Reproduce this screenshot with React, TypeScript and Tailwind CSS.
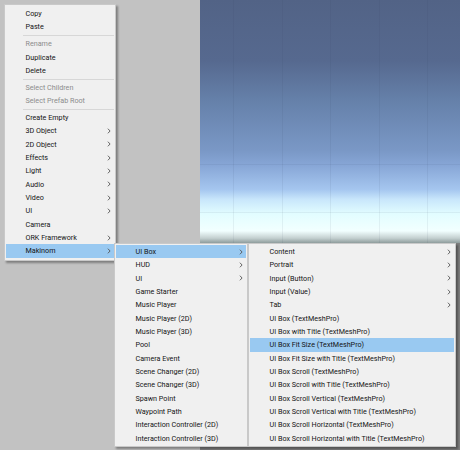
import clsx from "clsx";

type Row =
  | { kind: "item"; label: string; arrow?: boolean; disabled?: boolean; active?: boolean }
  | { kind: "sep" };

const mainMenu: Row[] = [
  { kind: "item", label: "Copy" },
  { kind: "item", label: "Paste" },
  { kind: "sep" },
  { kind: "item", label: "Rename", disabled: true },
  { kind: "item", label: "Duplicate" },
  { kind: "item", label: "Delete" },
  { kind: "sep" },
  { kind: "item", label: "Select Children", disabled: true },
  { kind: "item", label: "Select Prefab Root", disabled: true },
  { kind: "sep" },
  { kind: "item", label: "Create Empty" },
  { kind: "item", label: "3D Object", arrow: true },
  { kind: "item", label: "2D Object", arrow: true },
  { kind: "item", label: "Effects", arrow: true },
  { kind: "item", label: "Light", arrow: true },
  { kind: "item", label: "Audio", arrow: true },
  { kind: "item", label: "Video", arrow: true },
  { kind: "item", label: "UI", arrow: true },
  { kind: "item", label: "Camera" },
  { kind: "item", label: "ORK Framework", arrow: true },
  { kind: "item", label: "Makinom", arrow: true, active: true },
];

const makinomMenu: Row[] = [
  { kind: "item", label: "UI Box", arrow: true, active: true },
  { kind: "item", label: "HUD", arrow: true },
  { kind: "item", label: "UI", arrow: true },
  { kind: "item", label: "Game Starter" },
  { kind: "item", label: "Music Player" },
  { kind: "item", label: "Music Player (2D)" },
  { kind: "item", label: "Music Player (3D)" },
  { kind: "item", label: "Pool" },
  { kind: "item", label: "Camera Event" },
  { kind: "item", label: "Scene Changer (2D)" },
  { kind: "item", label: "Scene Changer (3D)" },
  { kind: "item", label: "Spawn Point" },
  { kind: "item", label: "Waypoint Path" },
  { kind: "item", label: "Interaction Controller (2D)" },
  { kind: "item", label: "Interaction Controller (3D)" },
];

const uiBoxMenu: Row[] = [
  { kind: "item", label: "Content", arrow: true },
  { kind: "item", label: "Portrait", arrow: true },
  { kind: "item", label: "Input (Button)", arrow: true },
  { kind: "item", label: "Input (Value)", arrow: true },
  { kind: "item", label: "Tab", arrow: true },
  { kind: "item", label: "UI Box (TextMeshPro)" },
  { kind: "item", label: "UI Box with Title (TextMeshPro)" },
  { kind: "item", label: "UI Box Fit Size (TextMeshPro)", active: true },
  { kind: "item", label: "UI Box Fit Size with Title (TextMeshPro)" },
  { kind: "item", label: "UI Box Scroll (TextMeshPro)" },
  { kind: "item", label: "UI Box Scroll with Title (TextMeshPro)" },
  { kind: "item", label: "UI Box Scroll Vertical (TextMeshPro)" },
  { kind: "item", label: "UI Box Scroll Vertical with Title (TextMeshPro)" },
  { kind: "item", label: "UI Box Scroll Horizontal (TextMeshPro)" },
  { kind: "item", label: "UI Box Scroll Horizontal with Title (TextMeshPro)" },
];

function Chevron() {
  return (
    <svg width="4" height="6" viewBox="0 0 4 6" className="shrink-0">
      <path d="M0.9 0.7 L3.1 3 L0.9 5.3" fill="none" stroke="#555" strokeWidth="0.9" />
    </svg>
  );
}

function Menu({ rows, className }: { rows: Row[]; className: string }) {
  return (
    <div
      className={clsx(
        "absolute flex flex-col border border-[#c9c9c9] bg-[#f0f0f0] p-px shadow-[2px_2px_2px_rgba(0,0,0,0.35)]",
        className
      )}
    >
      {rows.map((row, idx) =>
        row.kind === "sep" ? (
          <div key={idx} className="flex h-[3.6px] flex-col justify-center pl-[16.5px]">
            <div className="h-px bg-[#d7d7d7]" />
          </div>
        ) : (
          <div
            key={idx}
            className={clsx(
              "flex h-[13.33px] items-center justify-between pl-[19.5px] pr-[3.5px]",
              row.active && "bg-[#99c9f1]",
              row.disabled ? "text-[#8c8c8c]" : "text-[#141414]"
            )}
          >
            <span className="whitespace-nowrap leading-none">{row.label}</span>
            {row.arrow && <Chevron />}
          </div>
        )
      )}
    </div>
  );
}

export default function App() {
  return (
    <div className="relative h-[450px] w-[460px] overflow-hidden bg-[#c2c2c2] font-['Roboto',sans-serif] text-[7.2px]">
      <div className="flex h-full">
        {/* hierarchy panel */}
        <div className="w-[200px] shrink-0" />

        {/* scene view + panel below */}
        <div className="flex flex-1 flex-col">
          <div className="relative h-[243px] bg-[linear-gradient(to_bottom,#526386_0%,#56698f_25%,#6580a9_41%,#7a98c6_62%,#87a6d6_68%,#a5c6ef_78%,#c8e6fb_82%,#e2fdff_88%,#f2ffff_95%,#c4d0d0_98%,#8e9c9c_100%)]">
            <svg className="absolute inset-0" width="260" height="243">
              {[33, 82, 130, 179, 227].map((x) => (
                <line key={x} x1={x + 0.5} y1="0" x2={x + 0.5} y2="243" stroke="rgba(40,60,90,0.07)" strokeWidth="1" />
              ))}
              {[164, 212].map((y) => (
                <line key={y} x1="0" y1={y + 0.5} x2="260" y2={y + 0.5} stroke="rgba(40,60,90,0.07)" strokeWidth="1" />
              ))}
            </svg>
          </div>
          <div className="flex-1 bg-[#7e7e7e]" />
        </div>
      </div>

      <Menu rows={mainMenu} className="left-[4px] top-[4px] w-[112px] pb-[2px] pt-[2px]" />
      <Menu rows={makinomMenu} className="left-[114px] top-[243px] w-[134px]" />
      <Menu rows={uiBoxMenu} className="left-[248px] top-[243px] w-[208px]" />
    </div>
  );
}
